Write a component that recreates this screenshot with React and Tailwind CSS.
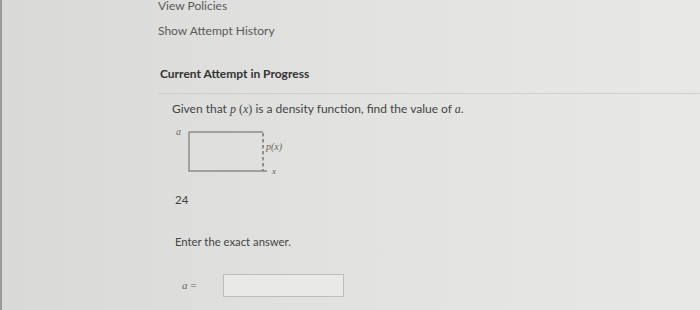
import React from 'react';

const serif = { fontFamily: '"Liberation Serif", serif' };

function DensityFigure() {
    return (
        <svg width="120" height="58" viewBox="0 0 120 58" className="block">
            <text x="4" y="11" fontFamily="'Liberation Serif', serif" fontStyle="italic" fontSize="10" fill="#666">a</text>
            <path d="M17 8 H91" stroke="#8c8c8a" strokeWidth="1.5" fill="none" />
            <path d="M17 8 V47 H95" stroke="#8c8c8a" strokeWidth="1.5" fill="none" />
            <path d="M91 9 V47" stroke="#777" strokeWidth="1.5" strokeDasharray="3.5 2.5" fill="none" />
            <text x="94" y="26" fontFamily="'Liberation Serif', serif" fontStyle="italic" fontSize="10" fill="#666">p(x)</text>
            <text x="100" y="50" fontFamily="'Liberation Serif', serif" fontStyle="italic" fontSize="9" fill="#666">x</text>
        </svg>
    );
}

export default function App() {
    return (
        <div
            className="w-[700px] h-[310px] overflow-hidden bg-linear-to-r from-[#d9d9d7] via-[#e2e2e0] to-[#e8e8e6] border-l-2 border-[#9a9a98] text-[12px] text-[#4a4a4a]"
            style={{ fontFamily: 'Lato, "Liberation Sans", sans-serif' }}
        >
            <div className="pl-[156px] -mt-[2px] flex flex-col">
                <div className="h-[16px] leading-[16px] text-[#5a5a5a]">View Policies</div>
                <div className="mt-[9px] h-[16px] leading-[16px] text-[#5a5a5a]">Show Attempt History</div>

                <div className="mt-[27px] pl-[2px] h-[16px] leading-[16px] font-bold text-[#333]">Current Attempt in Progress</div>

                <div className="mt-[11px] border-t border-[#cfcfcd]" />

                <div className="pl-[14px] pt-[7px]">
                    <div className="h-[16px] leading-[16px] text-[#444]">
                        Given that <i style={serif}>p</i>
                        <span style={serif}> (<i>x</i>)</span> is a density function, find the value of{' '}
                        <i style={serif}>a</i>.
                    </div>

                    <div className="mt-[7px]">
                        <DensityFigure />
                    </div>

                    <div className="mt-[10px] pl-[3px] h-[16px] leading-[16px] text-[11.5px] text-[#444]">24</div>

                    <div className="mt-[26px] pl-[3px] h-[16px] leading-[16px] text-[11.3px] text-[#444]">Enter the exact answer.</div>

                    <div className="mt-[24px] flex items-center">
                        <span className="w-[51px] pl-[10px] text-[11px] text-[#666]" style={serif}>
                            <i>a</i> =
                        </span>
                        <div className="w-[121px] h-[23px] border border-[#bdbdbb] bg-[#e9e9e7]" />
                    </div>
                </div>
            </div>
        </div>
    );
}
